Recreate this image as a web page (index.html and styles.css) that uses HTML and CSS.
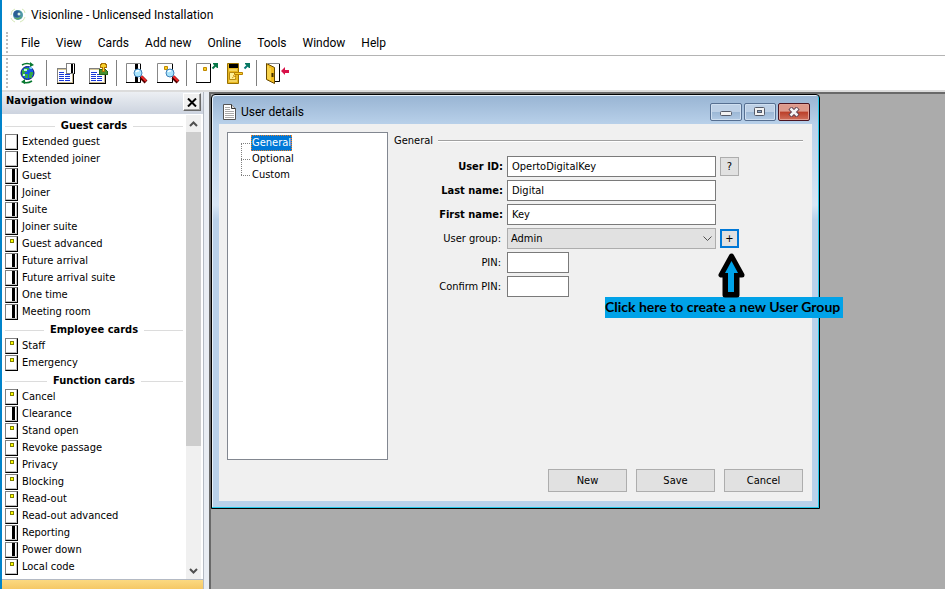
FILE: index.html
```html
<!DOCTYPE html>
<html lang="en">
<head>
<meta charset="utf-8">
<title>Visionline - Unlicensed Installation</title>
<link rel="stylesheet" href="styles.css">
</head>
<body>
<div class="app">
  <header class="titlebar">
    <svg class="logo" width="16" height="16" viewBox="0 0 16 16" aria-hidden="true">
      <circle cx="8" cy="8" r="5" fill="#4f9aa8"/><circle cx="7" cy="7" r="3.500" fill="#2b5f96"/><circle cx="9" cy="7" r="1.500" fill="#d9f3e2"/>
      <path d="M5 11q3 2 6-1" stroke="#5aa86a" stroke-width="1.5" fill="none"/>
      <path d="M1 8Q1 3 5 2M12 2q3 1 3 4M15 10q-1 4-5 5M1 11q1 3 4 4" stroke="#d5e8b8" fill="none"/>
    </svg>
    <span>Visionline - Unlicensed Installation</span>
  </header>
  <nav class="menubar" aria-label="Main menu">
    <button>File</button><button>View</button><button>Cards</button><button>Add new</button><button>Online</button><button>Tools</button><button>Window</button><button>Help</button>
  </nav>
  <div class="toolbar" role="toolbar" aria-label="Tools">
    <button aria-label="Refresh">
      <svg viewBox="0 0 24 24"><circle cx="10.500" cy="12" r="6.500" fill="#1458e8" stroke="#081878"/><path d="M5 9h2V7h5v2h-2v2H8v2h3v4H8v-2H5zM13 11h3v3h-1v3h-3v-3z" fill="#30a848"/><path d="M7 8h3v2H7zM6 13h2v2H6z" fill="#c0f4d8"/><path d="M12 6h3v2h-2z" fill="#80c8ff"/><path d="M5 4q5-3 10 0M6 21q4 2 9-1" fill="none" stroke="#087830" stroke-width="1.5"/><path d="M13 1l4 3-4 2zM8 18l-4 3 4 2z" fill="#087830"/></svg>
    </button>
    <i class="sep"></i>
    <button aria-label="Card list">
      <svg viewBox="0 0 24 24" shape-rendering="crispEdges"><path d="M2 7h16v16H2z" fill="#fff"/><path d="M2.500 22V7.500H11" fill="none" stroke="#808080"/><path d="M3 8.500h8" stroke="#d8c898"/><path d="M4 11.500h5M4 13.500h5M4 15.500h5M4 17.500h5M4 19.500h5M10 13.500h5M10 15.500h5M10 17.500h5M10 19.500h5" stroke="#1838d8"/><path d="M3 21.500h14V12" fill="none" stroke="#c8b890"/><path d="M2 22.500h16V12" fill="none" stroke="#000"/><path d="M11.500 2.500h8v10h-8z" fill="#fff" stroke="#808080"/><path d="M16 3h2v9h-2zM19 3h1v10h-1z" fill="#000"/></svg>
    </button>
    <button aria-label="User list">
      <svg viewBox="0 0 24 24" shape-rendering="crispEdges"><path d="M2 7h16v16H2z" fill="#fff"/><path d="M2.500 22V7.500H13" fill="none" stroke="#808080"/><path d="M3 8.500h9" stroke="#d8c898"/><path d="M4 11.500h6M4 13.500h5M4 15.500h5M4 17.500h5M4 19.500h5M10 13.500h5M10 15.500h5M10 17.500h5M10 19.500h5" stroke="#1838d8"/><path d="M3 21.500h14V12" fill="none" stroke="#c8b890"/><path d="M2 22.500h16V12" fill="none" stroke="#000"/><path d="M13 8h5l2 2v3h-8v-3z" fill="#489030" stroke="#286818"/><path d="M14 2h4v1h1v3h-2v4h-2V6h-2V3h1z" fill="#f8d028" stroke="#a87008"/></svg>
    </button>
    <i class="sep"></i>
    <button aria-label="Read guest card">
      <svg viewBox="0 0 24 24"><path d="M1.500 2.500h14v19h-14z" fill="#fff" stroke="#888"/><path d="M10 3h3v18h-3z"/><path d="M1 21.500h14.500V3" fill="none" stroke="#000"/><path d="M16 16l5 5" stroke="#500" stroke-width="4"/><path d="M16 15l5 5" stroke="#f02828" stroke-width="2"/><circle cx="13" cy="12" r="4" fill="#a8e4fc" stroke="#4080b8"/><path d="M11 11q1-2 3-1" stroke="#fff" fill="none" stroke-width="1.500"/></svg>
    </button>
    <button aria-label="Read employee card">
      <svg viewBox="0 0 24 24"><path d="M.5 2.500h15v19H.5z" fill="#fff" stroke="#888"/><path d="M0 21.500h15.500V3" fill="none" stroke="#000"/><path d="M7.500 5.500h3v3h-3z" fill="#f8d028" stroke="#c08800"/><path d="M16 16l5 5" stroke="#500" stroke-width="4"/><path d="M16 15l5 5" stroke="#f02828" stroke-width="2"/><circle cx="13" cy="12" r="4" fill="#a8e4fc" stroke="#4080b8"/><path d="M11 11q1-2 3-1" stroke="#fff" fill="none" stroke-width="1.500"/></svg>
    </button>
    <i class="sep"></i>
    <button aria-label="Export card">
      <svg viewBox="0 0 24 24"><path d="M1.500 2.500h14v19h-14z" fill="#fff" stroke="#888"/><path d="M1 21.500h14.500V3" fill="none" stroke="#000"/><path d="M8.500 6.500h3v3h-3z" fill="#f8d028" stroke="#c08800"/><path d="M17.500 7.500l4-4" stroke="#087848" stroke-width="2"/><path d="M18 2h5v5h-1l-4-4z" fill="#087848"/></svg>
    </button>
    <button aria-label="Export lock">
      <svg viewBox="0 0 24 24"><path d="M.5 2.500h11v20H.5z" fill="#e8b820" stroke="#987000"/><path d="M2 3h9v4H2z"/><path d="M2 9h8M2 20h8" stroke="#fff0a0"/><path d="M2.500 11.500h6v7h-6z" fill="#fff098" stroke="#b88810"/><path d="M6 14l3 3M5 17l4-3" stroke="#d8a020"/><path d="M7.500 11.500h8v2h-8z" fill="#f8d030" stroke="#b88000"/><path d="M17.500 7.500l4-4" stroke="#087878" stroke-width="2"/><path d="M18 2h5v5h-1l-4-4z" fill="#087860"/></svg>
    </button>
    <i class="sep"></i>
    <button aria-label="Exit">
      <svg viewBox="0 0 24 24"><path d="M3 2.500h11.500v18H9" fill="#fff" stroke="#888"/><path d="M9 20.500h5.500V3" fill="none" stroke="#000"/><path d="M1.500 2.500l8 4v16l-8-4z" fill="#f0bc20" stroke="#684800"/><path d="M3 5v13M5 7v12" stroke="#ffe878"/><path d="M7.500 12v4" stroke="#403000" stroke-width="2"/><path d="M16 10l4-4v3h4v3h-4v2z" fill="#d81048"/></svg>
    </button>
  </div>

  <div class="workspace">
    <aside class="navigation">
      <div class="nav-head"><h2>Navigation window</h2><button class="nav-close" aria-label="Close navigation window"><svg width="10" height="9" viewBox="0 0 10 9"><path d="M1 0.500l8 8M9 0.500l-8 8" stroke="#000" stroke-width="2"/></svg></button></div>
      <div class="nav-body">
        <div class="nav-list">
          <h3>Guest cards</h3>
          <ul>
            <li><i class="card"></i><a href="#">Extended guest</a></li>
            <li><i class="card"></i><a href="#">Extended joiner</a></li>
            <li><i class="card stripe"></i><a href="#">Guest</a></li>
            <li><i class="card stripe"></i><a href="#">Joiner</a></li>
            <li><i class="card stripe"></i><a href="#">Suite</a></li>
            <li><i class="card stripe"></i><a href="#">Joiner suite</a></li>
            <li><i class="card chip"></i><a href="#">Guest advanced</a></li>
            <li><i class="card stripe"></i><a href="#">Future arrival</a></li>
            <li><i class="card stripe"></i><a href="#">Future arrival suite</a></li>
            <li><i class="card stripe"></i><a href="#">One time</a></li>
            <li><i class="card stripe"></i><a href="#">Meeting room</a></li>
          </ul>
          <h3>Employee cards</h3>
          <ul>
            <li><i class="card chip"></i><a href="#">Staff</a></li>
            <li><i class="card chip"></i><a href="#">Emergency</a></li>
          </ul>
          <h3>Function cards</h3>
          <ul>
            <li><i class="card chip"></i><a href="#">Cancel</a></li>
            <li><i class="card stripe"></i><a href="#">Clearance</a></li>
            <li><i class="card chip"></i><a href="#">Stand open</a></li>
            <li><i class="card chip"></i><a href="#">Revoke passage</a></li>
            <li><i class="card chip"></i><a href="#">Privacy</a></li>
            <li><i class="card chip"></i><a href="#">Blocking</a></li>
            <li><i class="card chip"></i><a href="#">Read-out</a></li>
            <li><i class="card chip"></i><a href="#">Read-out advanced</a></li>
            <li><i class="card stripe"></i><a href="#">Reporting</a></li>
            <li><i class="card stripe"></i><a href="#">Power down</a></li>
            <li><i class="card chip"></i><a href="#">Local code</a></li>
          </ul>
        </div>
        <div class="scrollbar">
          <button aria-label="Scroll up"><svg width="9" height="6" viewBox="0 0 9 6"><path d="M1 5l3.500-3.500L8 5" fill="none" stroke="#505050" stroke-width="2"/></svg></button>
          <div class="track"><div class="thumb"></div></div>
          <button aria-label="Scroll down"><svg width="9" height="6" viewBox="0 0 9 6"><path d="M1 1l3.500 3.500L8 1" fill="none" stroke="#505050" stroke-width="2"/></svg></button>
        </div>
      </div>
      <div class="nav-foot"></div>
    </aside>

    <main class="desktop">
      <section class="dialog" aria-labelledby="dialog-title">
        <div class="dialog-frame">
          <div class="dialog-title">
            <svg width="13" height="16" viewBox="0 0 13 16"><path d="M.5.5h8l4 4v11H.5z" fill="#fff" stroke="#555"/><path d="M8.500.5v4h4" fill="#ddd" stroke="#333"/><path d="M2 3.500h5M2 5.500h5M2 7.500h9M2 9.500h9M2 11.500h9M2 13.500h9" stroke="#aaa"/></svg>
            <h1 id="dialog-title">User details</h1>
            <div class="window-buttons">
              <button aria-label="Minimize"><svg class="low" width="12" height="5" viewBox="0 0 12 5"><rect x=".5" y=".5" width="11" height="4" rx="1" fill="#f2f2f2" stroke="#545a68"/></svg></button>
              <button aria-label="Maximize"><svg width="12" height="10" viewBox="0 0 12 10"><rect x=".5" y=".5" width="10" height="8" rx="1" fill="#f2f2f2" stroke="#545a68"/><rect x="3.500" y="3.500" width="4" height="2" fill="#8ca9cb" stroke="#545a68"/></svg></button>
              <button class="close" aria-label="Close"><svg width="12" height="10" viewBox="0 0 12 10"><path d="M2 1l8 8M10 1L2 9" stroke="#5c4050" stroke-width="4.500"/><path d="M2.500 1.500l7 7M9.500 1.500l-7 7" stroke="#f5f5f5" stroke-width="2.500"/></svg></button>
            </div>
          </div>
          <div class="dialog-body">
            <div class="panes">
              <ul class="tree">
                <li><a class="selected" href="#">General</a></li>
                <li><a href="#">Optional</a></li>
                <li><a href="#">Custom</a></li>
              </ul>
              <form class="details">
                <h2>General</h2>
                <div class="fields">
                  <label class="required" for="uid">User ID:</label><input id="uid" type="text" value="OpertoDigitalKey"><button class="mini" type="button">?</button>
                  <label class="required" for="last">Last name:</label><input id="last" type="text" value="Digital">
                  <label class="required" for="first">First name:</label><input id="first" type="text" value="Key">
                  <label for="group">User group:</label>
                  <div class="select"><select id="group"><option>Admin</option></select><svg width="9" height="6" viewBox="0 0 9 6"><path d="M.5.5l4 4 4-4" fill="none" stroke="#505050"/></svg></div>
                  <button class="mini focused" type="button">+</button>
                  <label for="pin">PIN:</label><input class="short" id="pin" type="password">
                  <label for="pin2">Confirm PIN:</label><input class="short" id="pin2" type="password">
                </div>
              </form>
            </div>
            <div class="actions"><button>New</button><button>Save</button><button>Cancel</button></div>
          </div>
        </div>
        <div class="callout">
          <svg width="28" height="45" viewBox="0 0 28 45" aria-hidden="true"><path d="M13.500 3L3 22h4v20h12V22h5z" stroke="#000" stroke-width="5" stroke-linejoin="round"/><path d="M13.500 8L7 20h3v19h6V20h4z" fill="#00a2e8"/></svg>
          <p>Click here to create a new User Group</p>
        </div>
      </section>
    </main>
  </div>
</div>
</body>
</html>
```
FILE: styles.css
```css
*, *::before, *::after { box-sizing: border-box; }
body, h1, h2, h3, p, ul { margin: 0; padding: 0; }
ul { list-style: none; }
a { color: inherit; text-decoration: none; }
body { font: 11px/16px "DejaVu Sans Condensed", "Noto Sans", sans-serif; color: #000; background: #fff; }
button, input, select { font: inherit; color: inherit; margin: 0; }
svg { display: block; flex: none; }

.app { display: flex; flex-direction: column; height: 100vh; overflow: hidden; border-left: 2px solid #0083ca; }

.titlebar { display: flex; align-items: center; gap: 5px; height: 30px; padding-left: 8px; font: 12px/16px Roboto, sans-serif; }
.menubar { display: flex; align-items: center; height: 26px; padding-left: 11px; border-bottom: 1px solid #b4b4b4; position: relative; }
.menubar button { border: 0; background: none; padding: 0 8px; font: 12px/16px Roboto, sans-serif; }
.menubar::before, .toolbar::before { content: ""; position: absolute; left: 4px; top: 2px; bottom: 2px; border-left: 2px dotted #bcbcbc; }

.toolbar { display: flex; align-items: center; gap: 8px; height: 36px; padding-left: 15px; border-bottom: 2px solid #dcdcdc; position: relative; }
.toolbar button { border: 0; padding: 0; background: none; width: 24px; height: 24px; }
.toolbar svg { width: 24px; height: 24px; }
.sep { width: 1px; height: 26px; margin-left: -3px; background: #808080; }

.workspace { display: flex; flex: 1; min-height: 0; background: #e9edf3; }
.navigation { display: flex; flex-direction: column; flex: none; width: 202px; background: #fff; border-right: 1px solid #b4bac4; }
.nav-head { display: flex; justify-content: space-between; height: 22px; padding-left: 4px; background: linear-gradient(#eceff3, #ccd3df); }
.nav-head h2 { font-size: 11px; line-height: 17px; }
.nav-close { display: grid; place-items: center; width: 18px; height: 18px; margin: 1px 2px 0 0; padding: 0; background: #f0f0f0; border: 1px solid; border-color: #fff #696969 #696969 #fff; box-shadow: inset -1px -1px #a0a0a0; }
.nav-body { display: flex; flex: 1; min-height: 0; padding: 1px 2px 0 3px; }
.nav-list { flex: 1; padding: 1px 3px 0 0; overflow: hidden; }
.nav-list h3 { display: flex; align-items: center; gap: 6px; height: 17px; padding-top: 3px; font-size: 11px; line-height: 14px; white-space: nowrap; }
.nav-list h3::before, .nav-list h3::after { content: ""; flex: 1; height: 1px; background: #dcdcdc; }
.nav-list li { display: flex; align-items: center; gap: 4px; height: 17px; }
.card { position: relative; width: 13px; height: 16px; background: #fff; border: 1px solid; border-color: #808080 #000 #000 #808080; box-shadow: inset -1px -1px #c0c0c0; }
.stripe { background: linear-gradient(90deg, #fff 6px, #000 6px, #000 9px, #fff 9px); }
.chip::after { content: ""; position: absolute; left: 4px; top: 2px; width: 4px; height: 4px; background: #ff0; border: 1px solid #808000; }

.scrollbar { display: flex; flex-direction: column; width: 15px; background: #f0f0f0; }
.scrollbar button { display: grid; place-items: center; height: 17px; border: 0; padding: 0; background: none; }
.track { flex: 1; }
.thumb { height: 73%; background: #cdcdcd; }
.nav-foot { height: 10px; background: linear-gradient(#fbd982, #f5c866); border-top: 1px solid #b4bac4; }

.desktop { position: relative; flex: 1; min-width: 0; margin-left: 5px; background: #ababab; border: 1px solid #696969; border-width: 2px 0 0 2px; overflow: hidden; }

.dialog { position: absolute; left: 0; top: 0; width: 609px; }
.dialog-frame { padding: 0 7px 7px; background: linear-gradient(#98b4d3, #b9d1ea 30px, #d8e6f5 110px, #b9d1ea 125px); border: 1px solid #000; box-shadow: inset -1px -1px #24c8e8, inset 1px 1px #e8f2fb; border-radius: 4px 4px 0 0; }
.dialog-title { display: flex; align-items: center; gap: 5px; height: 29px; padding: 5px 2px 0 4px; }
.dialog-title h1 { flex: 1; font: 12px/16px Roboto, sans-serif; }
.window-buttons { display: flex; gap: 2px; }
.window-buttons button { display: grid; place-items: center; width: 32px; height: 18px; padding: 0; border: 1px solid #566f91; border-radius: 2px; background: linear-gradient(#bdd0e6 50%, #9bb7d5 50%, #b2cae4); box-shadow: inset 0 0 0 1px #cfdff0; }
.window-buttons .low { margin-top: 3px; }
.window-buttons .close { border-color: #4b1420; background: linear-gradient(#dd9a8c 45%, #bb3e28 50%, #d0705c); box-shadow: inset 0 0 0 1px #e3a295; }

.dialog-body { padding: 8px 9px 8px 8px; background: #f0f0f0; }
.panes { display: flex; gap: 6px; height: 328px; }
.tree { width: 161px; padding: 2px 0 0 22px; background: #fff; border: 1px solid #828790; }
.tree li { position: relative; display: flex; height: 16px; padding-left: 1px; }
.tree li::before { content: ""; position: absolute; left: -9px; top: 8px; width: 9px; border-top: 1px dotted #808080; }
.tree li:not(:last-child)::after { content: ""; position: absolute; left: -9px; top: 8px; height: 16px; border-left: 1px dotted #808080; }
.tree a { padding: 0 1px; }
.tree .selected { color: #fff; background: #0078d7; outline: 1px dotted #f08020; outline-offset: -1px; }
.details { flex: 1; min-width: 0; }
.details h2 { display: flex; align-items: center; gap: 5px; height: 18px; font-weight: 400; font-size: 11px; }
.details h2::after { content: ""; flex: 1; height: 2px; background: #a0a0a0; border-bottom: 1px solid #fff; }
.fields { display: grid; grid-template-columns: 109px 209px 19px; column-gap: 4px; row-gap: 3px; align-items: center; padding-top: 6px; }
.fields label { grid-column: 1; text-align: right; padding-right: 2px; }
.fields .required { font-weight: 700; padding-right: 0; }
.fields input { width: 100%; height: 21px; padding: 0 4px; border: 1px solid #7a7a7a; background: #fff; }
.fields .short { width: 62px; }
.select { position: relative; }
.select select { display: block; width: 100%; height: 21px; padding: 0 3px; appearance: none; border: 1px solid #adadad; border-radius: 0; background: #e1e1e1; }
.select svg { position: absolute; right: 4px; top: 8px; pointer-events: none; }
.mini { width: 19px; height: 19px; padding: 0; background: #e1e1e1; border: 1px solid #adadad; }
.focused { border: 2px solid #0078d7; }
.actions { display: flex; justify-content: flex-end; gap: 9px; padding: 9px 0 1px; }
.actions button { width: 79px; height: 23px; padding: 0; background: #e1e1e1; border: 1px solid #adadad; }

.callout { position: absolute; left: 394px; top: 159px; width: 238px; }
.callout svg { margin-left: 113px; }
.callout p { margin-top: -1px; height: 21px; background: #00a2e8; font: 700 14px/20px Lato, sans-serif; white-space: nowrap; }
```
